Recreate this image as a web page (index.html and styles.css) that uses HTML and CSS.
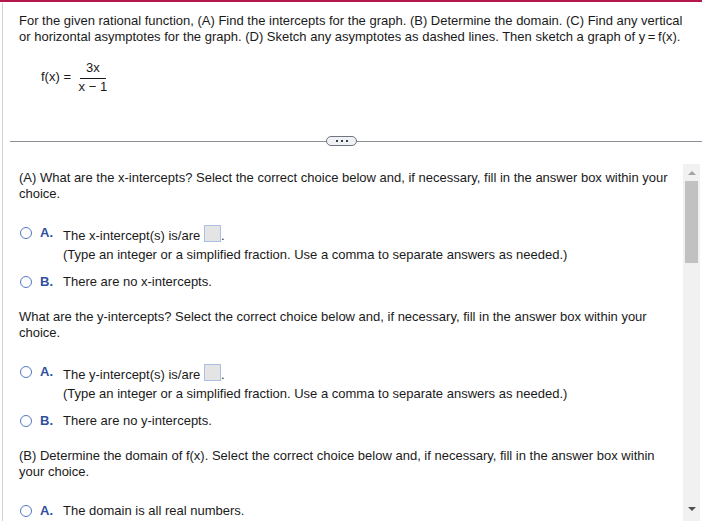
FILE: index.html
```html
<!DOCTYPE html>
<html lang="en">
<head>
  <meta charset="UTF-8">
  <meta name="viewport" content="width=device-width, initial-scale=1.0">
  <title>Rational Function</title>
  <link rel="stylesheet" href="styles.css">
</head>
<body>
  <div class="topbar"></div>

  <div class="frame">
    <div class="problem">
      <p class="intro">For the given rational function, (A) Find the intercepts for the graph. (B) Determine the domain. (C) Find any vertical or horizontal asymptotes for the graph. (D) Sketch any asymptotes as dashed lines. Then sketch a graph of y&thinsp;=&thinsp;f(x).</p>
      <p class="formula">f(x)&nbsp;=&nbsp;<span class="frac"><span class="num">3x</span><span class="den">x &minus; 1</span></span></p>
    </div>

    <div class="divider">
      <span class="rule rule-left"></span>
      <span class="more"><i></i><i></i><i></i></span>
      <span class="rule"></span>
    </div>

    <div class="pane">
      <div class="content">
        <div class="part">
          <p class="prompt">(A) What are the x-intercepts? Select the correct choice below and, if necessary, fill in the answer box within your choice.</p>
          <ul class="choices">
            <li class="choice">
              <span class="radio"></span>
              <span class="letter">A.</span>
              <div class="choice-text">
                <div class="answer-line">The x-intercept(s) is/are <span class="answer"></span>.</div>
                <div>(Type an integer or a simplified fraction. Use a comma to separate answers as needed.)</div>
              </div>
            </li>
            <li class="choice">
              <span class="radio"></span>
              <span class="letter">B.</span>
              <div class="choice-text">There are no x-intercepts.</div>
            </li>
          </ul>
        </div>

        <div class="part">
          <p class="prompt">What are the y-intercepts? Select the correct choice below and, if necessary, fill in the answer box within your choice.</p>
          <ul class="choices">
            <li class="choice">
              <span class="radio"></span>
              <span class="letter">A.</span>
              <div class="choice-text">
                <div class="answer-line">The y-intercept(s) is/are <span class="answer"></span>.</div>
                <div>(Type an integer or a simplified fraction. Use a comma to separate answers as needed.)</div>
              </div>
            </li>
            <li class="choice">
              <span class="radio"></span>
              <span class="letter">B.</span>
              <div class="choice-text">There are no y-intercepts.</div>
            </li>
          </ul>
        </div>

        <div class="part">
          <p class="prompt">(B) Determine the domain of f(x). Select the correct choice below and, if necessary, fill in the answer box within your choice.</p>
          <ul class="choices">
            <li class="choice">
              <span class="radio"></span>
              <span class="letter">A.</span>
              <div class="choice-text">The domain is all real numbers.</div>
            </li>
          </ul>
        </div>
      </div>

      <!-- fake scrollbar -->
      <div class="scrollbar">
        <span class="arrow"><span class="tri tri-up"></span></span>
        <span class="thumb"></span>
        <span class="track"></span>
        <span class="arrow arrow-bottom"><span class="tri tri-down"></span></span>
      </div>
    </div>
  </div>
</body>
</html>
```

FILE: styles.css
```css
html, body {
  margin: 0;
  padding: 0;
  height: 521px;
  overflow: hidden;
  background: #fff;
}

body {
  font-family: "Liberation Sans", Arial, sans-serif;
  font-size: 13px;
  line-height: 16px;
  color: #1a1a1a;
}

.topbar {
  height: 2px;
  background: #b3174d;
}

.frame {
  display: flex;
  flex-direction: column;
  height: 518px;
  margin: 1px 0 0 2px;
  border-left: 1px solid #d2d2d2;
}

.problem {
  padding: 10px 12px 0 16px;
}

.intro {
  margin: 0;
}

.formula {
  margin: 15px 0 0 22px;
}

.frac {
  display: inline-flex;
  flex-direction: column;
  align-items: center;
  vertical-align: middle;
  margin-left: 2px;
}

.num {
  padding: 0 6px 2px;
  border-bottom: 1px solid #1a1a1a;
}

.den {
  padding: 0 2px;
}

.divider {
  display: flex;
  align-items: center;
  height: 10px;
  margin: 41px 0 0 7px;
}

.rule {
  flex: 1;
  height: 1px;
  background: #8b9099;
}

.rule-left {
  flex: 0 0 316px;
}

.more {
  display: flex;
  align-items: center;
  justify-content: center;
  gap: 3px;
  width: 29px;
  height: 8px;
  border: 1px solid #6f7681;
  border-radius: 5px;
  background: #eff1f4;
}

.more i {
  width: 2px;
  height: 2px;
  background: #3a3f47;
}

.pane {
  display: flex;
  flex: 1;
  min-height: 0;
  margin-top: 18px;
}

.content {
  flex: 1;
  padding: 6px 10px 0 16px;
}

.part {
  margin-bottom: 19px;
}

.prompt {
  margin: 0;
}

.choices {
  list-style: none;
  margin: 23px 0 0;
  padding: 0;
}

.choice {
  display: flex;
  align-items: flex-start;
  margin-bottom: 11px;
}

.choice:last-child {
  margin-bottom: 0;
}

.radio {
  flex: none;
  width: 10px;
  height: 10px;
  margin: 2px 8px 0 1px;
  border: 1px solid #5578c4;
  border-radius: 50%;
  background: #fff;
}

.letter {
  flex: none;
  width: 23px;
  font-weight: bold;
  color: #2f4f9f;
}

.answer-line {
  padding-bottom: 3px;
}

.answer {
  display: inline-block;
  width: 15px;
  height: 15px;
  vertical-align: -2px;
  border: 1px solid #a9c0e4;
  background: #e4e4e4;
}

.scrollbar {
  display: flex;
  flex-direction: column;
  width: 17px;
  margin-right: 2px;
  background: #f1f1f1;
}

.arrow {
  display: flex;
  align-items: center;
  justify-content: center;
  height: 17px;
}

.arrow-bottom {
  margin-bottom: 4px;
}

.tri {
  width: 0;
  height: 0;
  border-left: 4px solid transparent;
  border-right: 4px solid transparent;
}

.tri-up {
  border-bottom: 4px solid #a3a3a3;
}

.tri-down {
  border-top: 4px solid #505050;
}

.thumb {
  height: 82px;
  margin: 0 2px;
  background: #c1c1c1;
}

.track {
  flex: 1;
}
```
